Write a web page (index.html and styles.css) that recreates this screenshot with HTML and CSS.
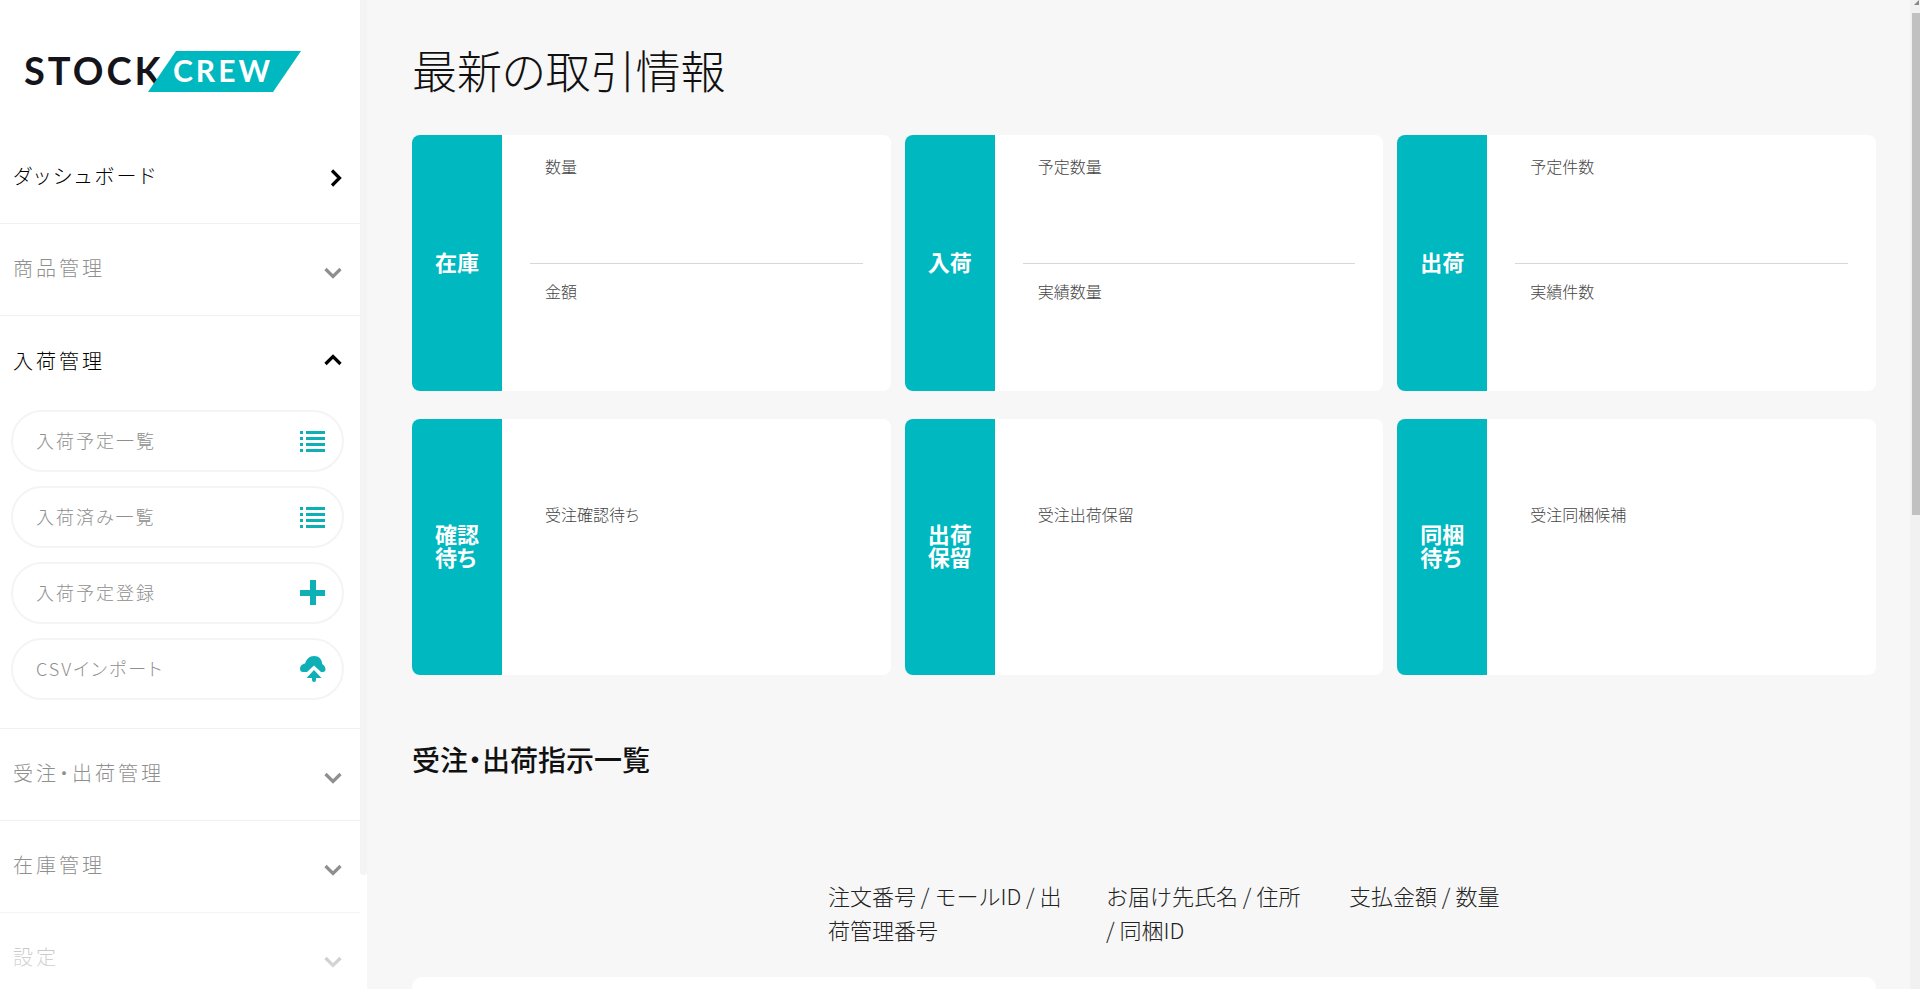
FILE: index.html
```html
<!DOCTYPE html>
<html lang="ja">

<head>
  <meta charset="UTF-8">
  <title>STOCKCREW</title>
  <link rel="stylesheet" href="styles.css">
</head>

<body>

  <svg class="symbols" aria-hidden="true">
    <symbol id="icon-list" viewBox="0 0 26 26">
      <path d="M0 3h3v3H0zM0 9h3v3H0zM0 15h3v3H0zM0 21h3v3H0zM6 3h19v3H6zM6 9h19v3H6zM6 15h19v3H6zM6 21h19v3H6z" />
    </symbol>
    <symbol id="icon-plus" viewBox="0 0 26 26">
      <path d="M10 0h6v10h9v6h-9v9h-6v-9H0v-6h10z" />
    </symbol>
    <symbol id="icon-cloud" viewBox="0 0 26 26">
      <path d="M3 16C1 16 0 15 0 12.500C0 10 2 8 5 7.500C6.500 3 9.500 0 14 0C19 0 22 3.500 22.200 8C24 9 25.500 11 25.500 13.500C25.500 15 24.500 16 23 16H21L14 9.500L7 16Z" />
      <path d="M14 14l7.500 8h-5.500v2q0 2-2 2t-2-2v-2H6.500z" />
    </symbol>
    <symbol id="icon-down" viewBox="0 0 18 12">
      <path d="M1.500 2L9 9.500L16.500 2" fill="none" stroke="currentColor" stroke-width="3.200" />
    </symbol>
    <symbol id="icon-up" viewBox="0 0 18 12">
      <path d="M1.500 10L9 2.500L16.500 10" fill="none" stroke="currentColor" stroke-width="3.200" />
    </symbol>
    <symbol id="icon-right" viewBox="0 0 12 18">
      <path d="M2 1.500L9.500 9L2 16.500" fill="none" stroke="currentColor" stroke-width="3.200" />
    </symbol>
  </svg>

  <div class="app">

    <aside class="sidebar">
      <a class="logo" href="#" aria-label="STOCKCREW">
        <svg width="280" height="44" viewBox="0 0 280 44">
          <text class="logo-stock" x="0" y="35">STOCK</text>
          <path d="M152 1H277L249 42H124Z" fill="#00b8bf" />
          <text class="logo-crew" x="149" y="32">CREW</text>
        </svg>
      </a>

      <nav class="nav">
        <a class="nav-item current" href="#">ダッシュボード
          <svg class="arrow-right"><use href="#icon-right" /></svg>
        </a>
        <button class="nav-item" type="button">商品管理
          <svg class="arrow"><use href="#icon-down" /></svg>
        </button>
        <div class="nav-group">
          <button class="nav-item current" type="button">入荷管理
            <svg class="arrow"><use href="#icon-up" /></svg>
          </button>
          <div class="sub-menu">
            <a class="sub-item" href="#">入荷予定一覧<svg><use href="#icon-list" /></svg></a>
            <a class="sub-item" href="#">入荷済み一覧<svg><use href="#icon-list" /></svg></a>
            <a class="sub-item" href="#">入荷予定登録<svg><use href="#icon-plus" /></svg></a>
            <a class="sub-item" href="#">CSVインポート<svg><use href="#icon-cloud" /></svg></a>
          </div>
        </div>
        <button class="nav-item" type="button">受注・出荷管理
          <svg class="arrow"><use href="#icon-down" /></svg>
        </button>
        <button class="nav-item" type="button">在庫管理
          <svg class="arrow"><use href="#icon-down" /></svg>
        </button>
        <button class="nav-item" type="button">設定
          <svg class="arrow"><use href="#icon-down" /></svg>
        </button>
      </nav>
      <div class="fade"></div>
    </aside>

    <div class="side-track">
      <div class="side-thumb"></div>
    </div>

    <main class="main">
      <h1>最新の取引情報</h1>

      <section class="cards">
        <div class="card">
          <h3>在庫</h3>
          <div class="card-body">
            <p>数量</p>
            <p>金額</p>
          </div>
        </div>
        <div class="card">
          <h3>入荷</h3>
          <div class="card-body">
            <p>予定数量</p>
            <p>実績数量</p>
          </div>
        </div>
        <div class="card">
          <h3>出荷</h3>
          <div class="card-body">
            <p>予定件数</p>
            <p>実績件数</p>
          </div>
        </div>
        <div class="card">
          <h3>確認<br>待ち</h3>
          <div class="card-body single">
            <p>受注確認待ち</p>
          </div>
        </div>
        <div class="card">
          <h3>出荷<br>保留</h3>
          <div class="card-body single">
            <p>受注出荷保留</p>
          </div>
        </div>
        <div class="card">
          <h3>同梱<br>待ち</h3>
          <div class="card-body single">
            <p>受注同梱候補</p>
          </div>
        </div>
      </section>

      <h2>受注・出荷指示一覧</h2>

      <table class="orders">
        <colgroup>
          <col class="col-check">
          <col class="col-number">
          <col class="col-address">
          <col>
        </colgroup>
        <thead>
          <tr>
            <td></td>
            <th>注文番号 / モールID / 出荷管理番号</th>
            <th>お届け先氏名 / 住所<br>/ 同梱ID</th>
            <th>支払金額 / 数量</th>
          </tr>
        </thead>
        <tbody>
          <tr>
            <td colspan="4"></td>
          </tr>
        </tbody>
      </table>
    </main>

    <div class="page-track">
      <svg class="page-up" viewBox="0 0 10 13"><path d="M4 5L9 0V5Z" /></svg>
      <div class="page-thumb"></div>
    </div>

  </div>

</body>

</html>
```

FILE: styles.css
```css
* {
  box-sizing: border-box;
}

body {
  margin: 0;
  background-color: #f7f7f7;
  color: #111;
  font-family: "Noto Sans CJK JP", sans-serif;
  font-weight: 300;
  font-feature-settings: "palt";
}

h1, h2, h3, p {
  margin: 0;
}

.symbols {
  display: none;
}

.app {
  display: flex;
  height: 100vh;
  overflow: hidden;
}

/* sidebar */
.sidebar {
  position: relative;
  flex: 0 0 360px;
  background-color: #fff;
  overflow: hidden;
}

.logo {
  display: block;
  height: 132px;
  padding: 50px 0 0 24px;
}

.logo svg {
  display: block;
}

.logo-stock, .logo-crew {
  font-family: Lato, sans-serif;
  font-weight: 700;
}

.logo-stock {
  font-size: 38px;
  letter-spacing: 3px;
  fill: #14141a;
}

.logo-crew {
  font-size: 30px;
  letter-spacing: 3px;
  fill: #fff;
}

.nav-item {
  display: flex;
  align-items: center;
  justify-content: space-between;
  width: 100%;
  height: 92px;
  padding: 0 18px 4px 13px;
  border: 0;
  border-bottom: 1px solid #f1f1f1;
  background: none;
  color: #8f8f8f;
  font: inherit;
  font-feature-settings: inherit;
  font-size: 20px;
  letter-spacing: 3px;
  text-align: left;
  text-decoration: none;
  cursor: pointer;
}

.nav-item.current {
  color: #000;
}

.arrow {
  width: 18px;
  height: 12px;
  margin-top: 10px;
}

.current .arrow {
  margin-top: 0;
}

.arrow-right {
  width: 12px;
  height: 18px;
  margin-top: 4px;
}

.nav-group {
  border-bottom: 1px solid #f1f1f1;
}

.nav-group .nav-item {
  border-bottom: 0;
}

.sub-menu {
  display: flex;
  flex-direction: column;
  gap: 14px;
  padding: 2px 16px 28px 11px;
}

.sub-item {
  display: flex;
  align-items: center;
  justify-content: space-between;
  height: 62px;
  padding: 0 16px 2px 23px;
  border: 2px solid #f4f4f4;
  border-radius: 31px;
  color: #8f8f8f;
  font-size: 18px;
  letter-spacing: 2px;
  text-decoration: none;
}

.sub-item svg {
  width: 26px;
  height: 26px;
  margin-top: 2px;
  fill: #0eb0b6;
}

.fade {
  position: absolute;
  left: 0;
  right: 0;
  bottom: 0;
  height: 110px;
  background: linear-gradient(rgba(255, 255, 255, 0), rgba(255, 255, 255, 0.8));
  pointer-events: none;
}

.side-track {
  flex: 0 0 7px;
  background-color: #fff;
}

.side-thumb {
  height: 875px;
  border-radius: 0 0 4px 4px;
  background-color: #f4f4f4;
}

/* main */
.main {
  flex: 1;
  min-width: 0;
  padding: 38px 34px 0 45px;
  overflow: hidden;
}

h1 {
  margin-bottom: 33px;
  font-size: 45px;
  font-weight: 300;
  line-height: 64px;
}

.cards {
  display: grid;
  grid-template-columns: repeat(3, 1fr);
  gap: 28px 14px;
}

.card {
  display: flex;
  min-height: 256px;
  border-radius: 8px;
  background-color: #fff;
  overflow: hidden;
}

.card h3 {
  display: flex;
  align-items: center;
  justify-content: center;
  flex: 0 0 90px;
  padding-bottom: 4px;
  background-color: #00b8bf;
  color: #fff;
  font-size: 22px;
  font-weight: 700;
  line-height: 23px;
}

.card-body {
  flex: 1;
  padding: 0 28px;
}

.card-body p {
  height: 128px;
  padding: 15px;
  color: #444;
  font-size: 16px;
  line-height: 32px;
}

.card-body p + p {
  padding-top: 11px;
  border-top: 1px solid #d8d8d8;
}

.card-body.single p {
  padding-top: 79px;
}

h2 {
  margin-top: 64px;
  font-size: 28px;
  font-weight: 500;
  line-height: 40px;
}

.orders {
  width: 100%;
  margin-top: 99px;
  table-layout: fixed;
  border-collapse: collapse;
  font-feature-settings: normal;
}

.col-check {
  width: 416px;
}

.col-number {
  width: 278px;
}

.col-address {
  width: 243px;
}

.orders th {
  padding: 0 28px 31px 0;
  color: #222;
  font-size: 22px;
  font-weight: 300;
  line-height: 34px;
  text-align: left;
  vertical-align: top;
}

.orders tbody td {
  height: 80px;
  border-radius: 10px;
  background-color: #fff;
}

/* page scrollbar */
.page-track {
  flex: 0 0 10px;
  background-color: #f1f1f1;
}

.page-up {
  display: block;
  width: 10px;
  height: 13px;
  fill: #888;
}

.page-thumb {
  height: 502px;
  margin-left: 2px;
  background-color: #c1c1c1;
}
```
